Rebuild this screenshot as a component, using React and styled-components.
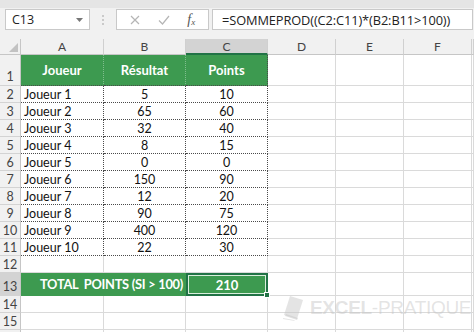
import React from 'react';
import styled, { createGlobalStyle, css } from 'styled-components';

const Green = '#3d9a50';
const DarkGreen = '#217346';
const Grid = '#dadada';
const HeadBg = '#f1f1f1';
const Dots = '1px dotted #4a4a4a';

const COLS = [21, 83, 82, 82, 68, 68, 68];

const GlobalStyle = createGlobalStyle`
  html, body {
    margin: 0;
    padding: 0;
    background: #fff;
    overflow: hidden;
  }
  * { box-sizing: border-box; }
`;

const Page = styled.div`
  width: 474px;
  height: 332px;
  overflow: hidden;
  position: relative;
  font-family: Lato, 'Open Sans', sans-serif;
`;

/* ---------- formula bar ---------- */

const Toolbar = styled.div`
  display: flex;
  align-items: flex-start;
  height: 39px;
  padding: 9px 1px 0 5px;
  background: ${HeadBg};
  box-shadow: inset 0 8px 0 #e5e5e5;
`;

const Box = styled.div`
  height: 21px;
  background: #fff;
  border: 1px solid #c9c9c9;
  display: flex;
  align-items: center;
`;

const NameBox = styled(Box)`
  width: 85px;
  padding: 0 6px 0 6px;
  justify-content: space-between;
  font-family: 'Open Sans', sans-serif;
  font-size: 12.5px;
  color: #222;
`;

const Divider = styled.div`
  width: 26px;
  height: 21px;
  display: flex;
  align-items: center;
  justify-content: center;
`;

const Buttons = styled(Box)`
  width: 93px;
  justify-content: space-around;
  padding: 0 4px;
`;

const Fx = styled.span`
  font-family: 'Liberation Serif', serif;
  font-style: italic;
  font-size: 14px;
  color: #555;
  sub {
    font-size: 9px;
    vertical-align: -1px;
  }
`;

const FormulaBox = styled(Box)`
  flex: 1;
  margin-left: 3px;
  padding-left: 9px;
  font-family: 'Open Sans', sans-serif;
  font-size: 12.8px;
  color: #222;
  letter-spacing: -0.1px;
`;

/* ---------- sheet ---------- */

const Sheet = styled.div`
  display: grid;
  grid-template-columns: ${COLS.map(c => `${c}px`).join(' ')} 1fr;
  grid-template-rows: 16px 31px repeat(11, 17px) 23px 17px 17px 17px;
  font-size: 12.5px;
  color: #111;
`;

const Cell = styled.div`
  border-right: 1px solid ${Grid};
  border-bottom: 1px solid ${Grid};
  display: flex;
  align-items: center;
  overflow: hidden;
  white-space: nowrap;
`;

const Corner = styled(Cell)`
  background: ${HeadBg};
  border-color: #c6c6c6;
  justify-content: flex-end;
  align-items: flex-end;
  padding: 0 2px 2px 0;
`;

const ColHeader = styled(Cell)`
  background: ${p => (p.$active ? '#d3d3d3' : HeadBg)};
  border-right-color: #d0d0d0;
  border-bottom: ${p =>
    p.$active ? `2px solid ${DarkGreen}` : '1px solid #c6c6c6'};
  justify-content: center;
  color: #444;
  font-size: 12px;
  padding-top: ${p => (p.$active ? 1 : 0)}px;
`;

const RowHeader = styled(Cell)`
  background: ${p => (p.$active ? '#d3d3d3' : HeadBg)};
  border-right-color: #c6c6c6;
  border-bottom-color: #d3d3d3;
  justify-content: center;
  align-items: ${p => (p.$bottom ? 'flex-end' : 'center')};
  color: #444;
  font-size: 12.5px;
  padding-bottom: ${p => (p.$bottom ? 1 : 0)}px;
`;

const HeadCell = styled(Cell)`
  background: ${Green};
  color: #fff;
  font-weight: 700;
  font-size: 13px;
  justify-content: center;
  border-right: 1px dotted rgba(255, 255, 255, 0.35);
  border-bottom: ${Dots};
  ${p =>
    p.$last &&
    css`
      border-right: ${Dots};
    `}
`;

const DataCell = styled(Cell)`
  justify-content: ${p => (p.$left ? 'flex-start' : 'center')};
  padding-left: ${p => (p.$left ? 3 : 0)}px;
  padding-top: 1px;
  border-right: ${Dots};
  border-bottom: ${Dots};
`;

const TotalLabel = styled(Cell)`
  grid-column: span 2;
  background: ${Green};
  color: #fff;
  font-weight: 700;
  font-size: 12.8px;
  letter-spacing: -0.25px;
  justify-content: flex-end;
  padding-right: 3px;
  border-right: 0;
  border-bottom-color: ${Green};
  white-space: pre;
`;

const TotalValue = styled(Cell)`
  position: relative;
  overflow: visible;
  background: ${Green};
  color: #fff;
  font-weight: 700;
  font-size: 13px;
  justify-content: center;
  border: 2px solid ${DarkGreen};
  box-shadow: inset 0 0 0 1px #d9eedc;
`;

const FillHandle = styled.span`
  position: absolute;
  right: -4px;
  bottom: -4px;
  width: 6px;
  height: 6px;
  background: ${DarkGreen};
  border: 1px solid #fff;
`;

const Watermark = styled.div`
  position: absolute;
  left: 281px;
  top: 295px;
  display: flex;
  align-items: center;
  gap: 1px;
  color: rgba(195, 195, 195, 0.45);
  font-family: 'Liberation Sans', sans-serif;
  font-size: 19px;
  letter-spacing: -0.3px;
  pointer-events: none;
  b {
    font-weight: 700;
  }
`;

const players = [
  ['Joueur 1', 5, 10],
  ['Joueur 2', 65, 60],
  ['Joueur 3', 32, 40],
  ['Joueur 4', 8, 15],
  ['Joueur 5', 0, 0],
  ['Joueur 6', 150, 90],
  ['Joueur 7', 12, 20],
  ['Joueur 8', 90, 75],
  ['Joueur 9', 400, 120],
  ['Joueur 10', 22, 30],
];

const letters = ['A', 'B', 'C', 'D', 'E', 'F'];

function Blanks({ from = 4 }) {
  const out = [];
  for (let i = from; i <= 7; i += 1) out.push(<Cell key={i} />);
  return out;
}

export default function App() {
  return (
    <Page>
      <GlobalStyle />
      <Toolbar>
        <NameBox>
          <span>C13</span>
          <svg width="7" height="4" viewBox="0 0 7 4">
            <path d="M0 0h7L3.5 4z" fill="#777" />
          </svg>
        </NameBox>
        <Divider>
          <svg width="2" height="10" viewBox="0 0 2 10">
            <circle cx="1" cy="1" r="0.8" fill="#999" />
            <circle cx="1" cy="5" r="0.8" fill="#999" />
            <circle cx="1" cy="9" r="0.8" fill="#999" />
          </svg>
        </Divider>
        <Buttons>
          <svg width="10" height="10" viewBox="0 0 10 10">
            <path d="M1 1l8 8M9 1L1 9" stroke="#b5b5b5" strokeWidth="1.2" />
          </svg>
          <svg width="12" height="10" viewBox="0 0 12 10">
            <path d="M1 5.5l3.5 3.5L11 1" stroke="#b5b5b5" strokeWidth="1.2" fill="none" />
          </svg>
          <Fx>
            f<sub>x</sub>
          </Fx>
        </Buttons>
        <FormulaBox>=SOMMEPROD((C2:C11)*(B2:B11&gt;100))</FormulaBox>
      </Toolbar>

      <Sheet>
        <Corner>
          <svg width="9" height="9" viewBox="0 0 9 9">
            <path d="M9 0v9H0z" fill="#c2c2c2" />
          </svg>
        </Corner>
        {letters.map(l => (
          <ColHeader key={l} $active={l === 'C'}>
            {l}
          </ColHeader>
        ))}
        <ColHeader />

        <RowHeader $bottom>1</RowHeader>
        <HeadCell>Joueur</HeadCell>
        <HeadCell>Résultat</HeadCell>
        <HeadCell $last>Points</HeadCell>
        <Blanks />

        {players.map(([name, score, pts], i) => (
          <React.Fragment key={name}>
            <RowHeader>{i + 2}</RowHeader>
            <DataCell $left>{name}</DataCell>
            <DataCell>{score}</DataCell>
            <DataCell>{pts}</DataCell>
            <Blanks />
          </React.Fragment>
        ))}

        <RowHeader>12</RowHeader>
        <Blanks from={1} />

        <RowHeader $active $bottom>
          13
        </RowHeader>
        <TotalLabel>{'TOTAL  POINTS (SI > 100)'}</TotalLabel>
        <TotalValue>
          210
          <FillHandle />
        </TotalValue>
        <Blanks />

        {[14, 15].map(n => (
          <React.Fragment key={n}>
            <RowHeader>{n}</RowHeader>
            <Blanks from={1} />
          </React.Fragment>
        ))}
        <RowHeader />
        <Blanks from={1} />
      </Sheet>

      <Watermark>
        <svg width="28" height="26" viewBox="0 0 28 26">
          <g fill="rgba(195,195,195,0.45)">
            <path d="M9 1l13 4-6 19-13-4z" />
            <path d="M4 21l12 4 1-2-12-4z" />
            <path d="M2 24l12 2-1-1-11-2z" />
          </g>
        </svg>
        <span>
          <b>EXCEL</b>-PRATIQUE
        </span>
      </Watermark>
    </Page>
  );
}
